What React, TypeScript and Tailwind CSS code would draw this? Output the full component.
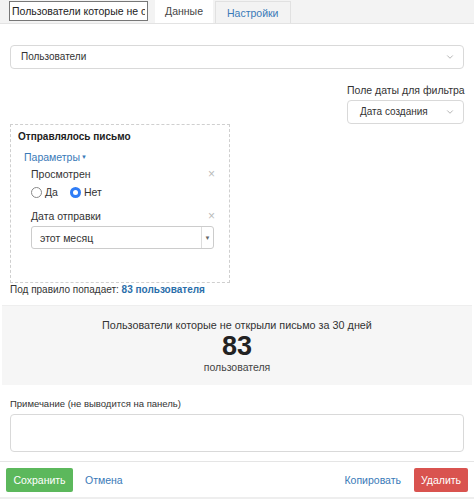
import { ChevronDown } from "lucide-react";

function Select({ value, className = "" }: { value: string; className?: string }) {
  return (
    <div
      className={`flex items-center justify-between rounded border border-[#d9d9d9] bg-white pl-2.5 pr-2 text-[#333] ${className}`}
    >
      <span>{value}</span>
      <ChevronDown size={10} strokeWidth={1.5} className="text-[#888]" />
    </div>
  );
}

export default function App() {
  return (
    <div className="h-[499px] w-[474px] overflow-hidden bg-white font-['Liberation_Sans',Arial,sans-serif] text-[10px] leading-[14px] text-[#333]">
      {/* tabs */}
      <div className="flex h-6 items-end border-b border-[#e3e3e3] bg-[#f3f3f3]">
        <input
          readOnly
          value="Пользователи которые не открыли письмо за 30 дней"
          className="mb-[2px] ml-[9px] h-5 w-[139px] border border-[#777] bg-white px-[2px] text-[10.5px] text-[#222] outline-none"
        />
        <div className="ml-[7px] flex h-6 w-[58px] items-center justify-center bg-white text-[10.5px] text-[#444]">
          Данные
        </div>
        <div className="ml-[2px] flex h-[22px] items-center border border-b-0 border-[#e1e1e1] px-[11px] text-[10.5px] text-[#3a7ab8]">
          Настройки
        </div>
      </div>

      <div className="px-[10px]">
        <Select value="Пользователи" className="mt-[21px] h-[24px]" />

        <div className="mt-[14px] flex flex-col items-end">
          <div className="w-[117px] whitespace-nowrap text-[10.5px]">Поле даты для фильтра</div>
          <Select value="Дата создания" className="mt-[3px] h-[24px] w-[117px] pl-3" />
        </div>

        <div className="h-[159px] w-[220px] border border-dashed border-[#cfcfcf] px-[7px] pt-[5px]">
          <div className="font-bold text-[#222]">Отправлялось письмо</div>
          <div className="ml-[6px] mt-[6px] flex items-center text-[10.5px] text-[#3a7ab8]">
            Параметры
            <span className="ml-[1px] text-[6px]">▼</span>
          </div>
          <div className="pl-[13px] pr-[7px] text-[10.5px]">
            <div className="mt-[3px] flex items-center justify-between">
              <span>Просмотрен</span>
              <span className="text-[12px] text-[#bbb]">×</span>
            </div>
            <div className="mt-[4px] flex items-center gap-1.5">
              <label className="flex items-center gap-[3px]">
                <span className="inline-block h-[11px] w-[11px] rounded-full border border-[#888] bg-white" />
                Да
              </label>
              <label className="ml-[6px] flex items-center gap-[3px]">
                <span className="flex h-[11px] w-[11px] items-center justify-center rounded-full bg-[#2f7df6]">
                  <span className="h-[5px] w-[5px] rounded-full bg-white" />
                </span>
                Нет
              </label>
            </div>
            <div className="mt-[10px] flex items-center justify-between">
              <span>Дата отправки</span>
              <span className="text-[12px] text-[#bbb]">×</span>
            </div>
            <div className="mt-[3px] flex h-[23px] w-[183px] items-center rounded-[3px] border border-[#ccc] bg-white">
              <span className="flex-1 pl-[8px] text-[#333]">этот месяц</span>
              <span className="flex h-full w-[12px] items-center justify-center border-l border-[#ddd] text-[6px] text-[#666]">
                ▼
              </span>
            </div>
          </div>
        </div>

        <div>
          Под правило попадает: <span className="font-bold text-[#2a6eaa]">83 пользователя</span>
        </div>
      </div>

      <div className="mx-[2px] mt-[8px] flex h-[80px] flex-col items-center justify-center border-t border-[#eee] bg-[#f6f6f6]">
        <div className="text-[10.8px] text-[#333]">Пользователи которые не открыли письмо за 30 дней</div>
        <div className="text-[27px] font-bold leading-[28px] text-[#222]">83</div>
        <div className="text-[10.5px] text-[#444]">пользователя</div>
      </div>

      <div className="px-[10px] pt-[12px]">
        <div className="text-[9.5px]">Примечание (не выводится на панель)</div>
        <div className="mt-[3px] h-[38px] rounded border border-[#d9d9d9] bg-white" />
      </div>

      <div className="mt-[9px] flex h-[36px] items-center border-t border-[#e5e5e5] px-[6px] text-[10.5px]">
        <button className="h-[24px] w-[67px] rounded-[2px] bg-[#5cb85c] text-white">Сохранить</button>
        <button className="ml-[12px] text-[#3a7ab8]">Отмена</button>
        <div className="flex-1" />
        <button className="text-[#3a7ab8]">Копировать</button>
        <button className="ml-[13px] h-[24px] w-[54px] rounded-[2px] bg-[#d9534f] text-white">Удалить</button>
      </div>
      <div className="h-[3px] bg-[#eee]" />
    </div>
  );
}
